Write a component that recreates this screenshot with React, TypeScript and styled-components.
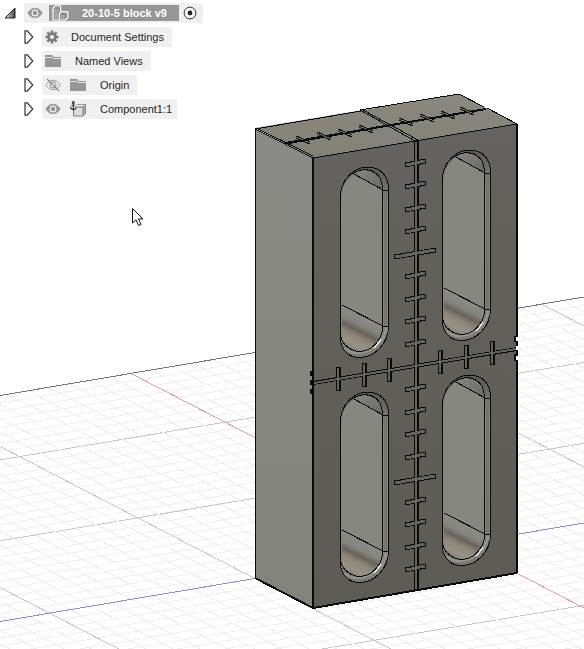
import React from "react";
import styled, { createGlobalStyle } from "styled-components";

const GlobalStyle = createGlobalStyle`
  * { box-sizing: border-box; }
  html, body, #root { height: 100%; margin: 0; }
  body {
    background: #fff;
    color: #262626;
    font: 11px/20px "Liberation Sans", Arial, sans-serif;
    overflow: hidden;
  }
`;

const Workspace = styled.main`
  display: grid;
  width: 100%;
  height: 100%;
  overflow: hidden;
`;

const Viewport = styled.svg`
  grid-area: 1 / 1;
  display: block;
  width: 100%;
  height: 100%;
  min-height: 0;
`;

const Browser = styled.nav`
  grid-area: 1 / 1;
  z-index: 1;
  justify-self: start;
  align-self: start;
  padding: 3px 0 0 4px;
`;

const Tree = styled.ul`
  display: flex;
  flex-direction: column;
  gap: 4px;
  margin: 0;
  padding: 0;
  list-style: none;
`;

const Row = styled.li<{ $nested?: boolean }>`
  display: flex;
  align-items: center;
  gap: 8px;
  height: 20px;
  padding-left: ${(p) => (p.$nested ? "20px" : "0")};
`;

const IconButton = styled.button<{ $width: number }>`
  display: flex;
  align-items: center;
  flex: none;
  width: ${(p) => p.$width}px;
  height: 20px;
  margin: 0;
  padding: 0;
  border: 0;
  background: none;
`;

const Pill = styled.div<{ $end: number }>`
  display: flex;
  align-items: center;
  height: 20px;
  padding: 0 ${(p) => p.$end}px 0 3px;
  background: #f0f0f0;
`;

const IconSlot = styled.span<{ $width: number }>`
  display: flex;
  flex: none;
  width: ${(p) => p.$width}px;
`;

const Label = styled.button`
  height: 20px;
  margin: 0;
  padding: 0;
  border: 0;
  background: none;
  color: inherit;
  font: inherit;
  white-space: nowrap;
`;

const ActiveDocument = styled.div`
  display: flex;
  align-items: center;
  width: 130px;
  height: 16px;
  margin-right: 4px;
  padding-left: 3px;
  background: #969696;
  color: #fff;
  font-weight: bold;
`;

const EyeIcon = ({ off = false }: { off?: boolean }) => (
  <svg width="16" height="14" viewBox="0 0 16 14" fill="none">
    <path
      d="M.8 7C3 3.6 5.2 2.3 8 2.3S13 3.6 15.2 7C13 10.4 10.8 11.7 8 11.7S3 10.4.8 7Z"
      fill={off ? "none" : "#949494"}
      stroke="#a0a0a0"
    />
    <circle cx="8" cy="7" r="2.9" fill={off ? "none" : "#949494"} stroke={off ? "#a0a0a0" : "#f0f0f0"} strokeWidth="1.2" />
    {off && <path d="M2 1 14 13" stroke="#8c8c8c" strokeWidth="1.2" />}
  </svg>
);

const FolderIcon = () => (
  <svg width="17" height="14" viewBox="0 0 17 14">
    <path d="M0 1h7l2 2h7v10H0Z" fill="#979797" />
    <path d="M0 3.5h7L8.500 4.500H16" fill="none" stroke="#e4e4e4" />
  </svg>
);

const GearIcon = () => (
  <svg width="14" height="14" viewBox="0 0 14 14">
    <g stroke="#7d7d7d" strokeWidth="2.600">
      <path d="M7 .5v13M.5 7h13M2.400 2.400l9.200 9.200M11.600 2.400l-9.200 9.200" />
    </g>
    <circle cx="7" cy="7" r="3.400" fill="#f0f0f0" stroke="#7d7d7d" strokeWidth="2.600" />
  </svg>
);

const AssemblyIcon = () => (
  <svg width="17" height="16" viewBox="0 0 17 16" fill="none" stroke="#fff" strokeLinejoin="round" strokeWidth="1.200">
    <path d="M1 3.200 3.200 1H8.600V6.500L15.800 6.800V12.500L13.500 15H1Z" fill="#8d8d8d" />
    <path d="M7.300 9 9.300 6.600H15.800M7.300 9V15" />
    <path d="M2.200 4H6.600V13.800H2.200ZM8.600 10H12.800V13.800H8.600Z" fill="#a6a6a6" stroke="none" />
  </svg>
);

const ComponentIcon = () => (
  <svg width="17" height="16" viewBox="0 0 17 16" fill="none">
    <path d="M4.500 6 6.500 3.500H15.500L13 6Z" fill="#fafafa" stroke="#999" />
    <path d="M13 6 15.500 3.500V12.500L13 15Z" fill="#b4b4b4" stroke="#888" />
    <path d="M3.500 6H13V15H3.500Z" fill="#dcdcdc" stroke="#808080" />
    <path d="M0 0H6.500V8.500H0Z" fill="#f0f0f0" />
    <g stroke="#333" strokeWidth="1.100">
      <circle cx="3.300" cy="1.600" r="1" />
      <path d="M3.300 2.800V8.600M1.500 4.300H5.100M.6 5.800C.6 7.800 2 8.600 3.300 8.600S6 7.800 6 5.800" />
    </g>
  </svg>
);

const BranchIcon = () => (
  <svg width="10" height="14" viewBox="0 0 10 14">
    <path d="M1 .8h2.200L8.800 7l-5.600 6.200H1Z" fill="#fafafa" stroke="#333" strokeWidth="1.200" />
  </svg>
);

// Rhombic ground grid, drawn down from its far edge.
const ground = (x: number) => 395 - 0.167 * x;
const alongLines = Array.from({ length: 44 }, (_, i) => i).map((i) => ({
  major: i === 8 || i === 18 || i === 38,
  skip: i === 28 || i === 0,
  y: ground(0) + i * 8.1,
}));
const acrossLines = Array.from({ length: 58 }, (_, i) => i - 32).map((i) => {
  const y0 = 305.5 + i * 14.1;
  const x = Math.max(0, (395 - y0) / 0.685);
  return { major: i % 10 === 0, skip: i === 0, x, y: y0 + 0.518 * x, endY: y0 + 0.518 * 584 };
});

const Ground = () => (
  <g strokeWidth="1" shapeRendering="crispEdges">
    {alongLines.filter((l) => !l.skip).map((l) => (
      <line key={l.y} x1="0" y1={l.y} x2="584" y2={l.y - 97.5} stroke={l.major ? "#c8c8c8" : "#f0f0f0"} />
    ))}
    {acrossLines.filter((l) => !l.skip).map((l) => (
      <line key={l.endY} x1={l.x} y1={l.y} x2="584" y2={l.endY} stroke={l.major ? "#c8c8c8" : "#ededed"} />
    ))}
    <path d="M0 395.500 584 297" stroke="#777" />
    <path d="M131 373.500 584 608" stroke="#dda0a5" />
    <path d="M0 621.500 584 523" stroke="#918fd0" />
  </g>
);

const outerSlot =
  "M340 199C340 180 354 167 367 167C381 167 388.500 176 388.500 190V326C388.500 344 374 357 361 357.500C347 358 340 349 340 334Z";
const innerSlot =
  "M342 196C342 181 355 170 366 170C377 170 382.500 178 382.500 190V327C382.500 341 371 351 360 351.500C349 351 342 346 342 334Z";

const Slot = ({ x, y }: { x: number; y: number }) => (
  <g transform={`translate(${x} ${y})`}>
    <path d={outerSlot} fill="url(#rim)" />
    <path d={innerSlot} fill="#868780" />
    <path d="M354 174C367 166 382.500 173 382.500 189Z" fill="url(#vault)" />
    <path d="M342 305 382.500 326.500C382 341 371 351 360 351.500C349 351 342 346 342 334Z" fill="url(#floor)" />
    <path d="M385.500 192V326" stroke="#74756f" strokeWidth="3" />
    <path d="M345 348C358 361 384 348 386 328" fill="none" stroke="#96958f" strokeWidth="2" />
    <path d="M374 348 381 339" stroke="#efede8" strokeWidth="1.500" />
    <g fill="none" stroke="#080808" shapeRendering="crispEdges">
      <path d={outerSlot} />
      <path d="M352 174C367 165 382.500 171 382.500 190V327C382.500 341 371 351 360 351.500C350 351 343 345 341 337" />
      <path d="M354 174 383 190H388M342 305 383 326H388" />
    </g>
  </g>
);

const smallTicks = [163, 185, 208, 230, 275, 298, 320, 343, 388, 411, 433, 456, 501, 523, 546, 568];
const longTicks = [253, 479];
const middleTicks = [[338, 379], [364, 375], [389, 370], [440, 362], [466, 357], [492, 353]];

const tickPath = (inset: number) =>
  smallTicks.map((y) => `M${405 + inset} ${y + 2}L${426 - inset} ${y - 2}`).join("") +
  longTicks.map((y) => `M${394 + inset} ${y + 4}L${436 - inset} ${y - 3}`).join("");
const middlePath = (half: number) =>
  middleTicks.map(([x, y]) => `M${x} ${y - half}V${y + half}`).join("");
const topTicks = [[303, 140], [324, 136], [345, 133], [366, 129], [406, 122], [427, 118], [448, 115], [467, 111]];
const topSeam = topTicks.map(([x, y]) => `M${x - 7} ${y - 3}L${x + 7} ${y + 3}`).join("");

const Block = () => (
  <g>
    <path d="M255 129 313 158V608L255 578Z" fill="url(#side)" />
    <path d="M255 128 459 94 517 124 313 158Z" fill="url(#lid)" />
    <path d="M313 158 517 124V573L313 608Z" fill="url(#front)" />
    <g fill="none" stroke="#0a0a0a" shapeRendering="crispEdges">
      <path d="M285 143 486 109" strokeWidth="2" />
      <path d="M360 110 415 141M363 110 418 140" />
      <path d="M258 129 313 156" />
      <path d={topSeam} strokeWidth="3" />
      <path d={topSeam} stroke="#817f75" strokeWidth="1" />
      <path d="M286 144 486 109" />
      <path d={tickPath(0)} strokeWidth="5" />
      <path d="M416 141V591" strokeWidth="5" />
      <path d={middlePath(12)} strokeWidth="5" />
      <path d="M313 383 517 349" strokeWidth="4" />
      <path d={tickPath(1)} stroke="#65635e" strokeWidth="3" />
      <path d="M416 142V590" stroke="#65635e" strokeWidth="2" />
      <path d={middlePath(11)} stroke="#65635e" strokeWidth="2" />
      <path d="M314 383 516 349" stroke="#65635e" strokeWidth="2" />
      <path d="M255 578V129L361 111M360 110 459 94 484 107M487 108 517 124" />
      <path d="M255 129 313 158 517 124" />
      <path d="M313 158V608M517 124V573M255 578 313 608 517 573" strokeWidth="2" />
      <path d="M312 371v5M312 380v5M312 389v5" strokeWidth="4" />
      <path d="M517 337v4M517 346v4M517 356v4" stroke="#fff" strokeWidth="2" />
      <path d="M515 336v6M515 354v7" strokeWidth="2" />
    </g>
    <Slot x={0} y={0} />
    <Slot x={102} y={-17} />
    <Slot x={0} y={225} />
    <Slot x={102} y={208} />
  </g>
);

const Scene = () => (
  <Viewport viewBox="0 0 584 649" preserveAspectRatio="xMinYMin slice" role="img" aria-label="Block model on ground grid">
    <defs>
      <linearGradient id="side" x1="0" y1="0" x2="0" y2="1">
        <stop stopColor="#8a8b86" /><stop offset="1" stopColor="#82837c" />
      </linearGradient>
      <linearGradient id="lid" x1="0" y1="0" x2="0" y2="1">
        <stop stopColor="#8b897f" /><stop offset="1" stopColor="#838177" />
      </linearGradient>
      <linearGradient id="front" x1="0" y1="0" x2="0" y2="1">
        <stop stopColor="#64635f" /><stop offset="1" stopColor="#5c5b55" />
      </linearGradient>
      <linearGradient id="rim" x1="0" y1="0" x2="0" y2="1">
        <stop stopColor="#595852" /><stop offset=".12" stopColor="#74746e" />
        <stop offset=".2" stopColor="#888982" /><stop offset=".9" stopColor="#85857e" />
        <stop offset="1" stopColor="#777670" />
      </linearGradient>
      <linearGradient id="vault" x1="0" y1="0" x2="1" y2="1">
        <stop stopColor="#878780" /><stop offset=".6" stopColor="#75746e" /><stop offset="1" stopColor="#686761" />
      </linearGradient>
      <linearGradient id="floor" gradientUnits="userSpaceOnUse" x1="363" y1="315" x2="347" y2="347">
        <stop stopColor="#8b8b86" /><stop offset=".28" stopColor="#85847f" />
        <stop offset=".45" stopColor="#68635b" /><stop offset=".62" stopColor="#8e867b" />
        <stop offset=".85" stopColor="#989186" /><stop offset="1" stopColor="#85817a" />
      </linearGradient>
      <linearGradient id="expanded" x1="0" y1="0" x2="1" y2="0">
        <stop stopColor="#eee" /><stop offset="1" stopColor="#444" />
      </linearGradient>
    </defs>
    <Ground />
    <Block />
    <path
      d="M132.500 208.500V223L136 219.800 138.600 225.500 141 224.400 138.500 218.900H143Z"
      fill="#fff" stroke="#111"
    />
  </Viewport>
);

type Item = { name: string; icon: React.ReactNode; slot: number; end: number; eye?: "on" | "off" };
const items: Item[] = [
  { name: "Document Settings", icon: <GearIcon />, slot: 26, end: 8 },
  { name: "Named Views", icon: <FolderIcon />, slot: 30, end: 8 },
  { name: "Origin", icon: <FolderIcon />, slot: 30, end: 8, eye: "off" },
  { name: "Component1:1", icon: <ComponentIcon />, slot: 30, end: 5, eye: "on" },
];

export default function App() {
  return (
    <Workspace>
      <GlobalStyle />
      <Scene />
      <Browser aria-label="Browser">
        <Tree>
          <Row>
            <IconButton $width={12} aria-label="Collapse document">
              <svg width="12" height="12" viewBox="0 0 12 12">
                <path d="M11 1v10H1Z" fill="url(#expanded)" stroke="#222" />
              </svg>
            </IconButton>
            <Pill $end={6}>
              <IconButton $width={22} aria-label="Toggle document visibility"><EyeIcon /></IconButton>
              <ActiveDocument>
                <IconSlot $width={30}><AssemblyIcon /></IconSlot>
                20-10-5 block v9
              </ActiveDocument>
              <IconButton $width={14} aria-label="Activate document">
                <svg width="14" height="14" viewBox="0 0 14 14">
                  <circle cx="7" cy="7" r="5.900" fill="#fafafa" stroke="#333" />
                  <circle cx="7" cy="7" r="2.400" fill="#222" />
                </svg>
              </IconButton>
            </Pill>
          </Row>
          {items.map((item) => (
            <Row key={item.name} $nested>
              <IconButton $width={10} aria-label={`Expand ${item.name}`}><BranchIcon /></IconButton>
              <Pill $end={item.end}>
                {item.eye && (
                  <IconButton $width={25} aria-label={`Toggle ${item.name} visibility`}>
                    <EyeIcon off={item.eye === "off"} />
                  </IconButton>
                )}
                <IconSlot $width={item.slot}>{item.icon}</IconSlot>
                <Label>{item.name}</Label>
              </Pill>
            </Row>
          ))}
        </Tree>
      </Browser>
    </Workspace>
  );
}
